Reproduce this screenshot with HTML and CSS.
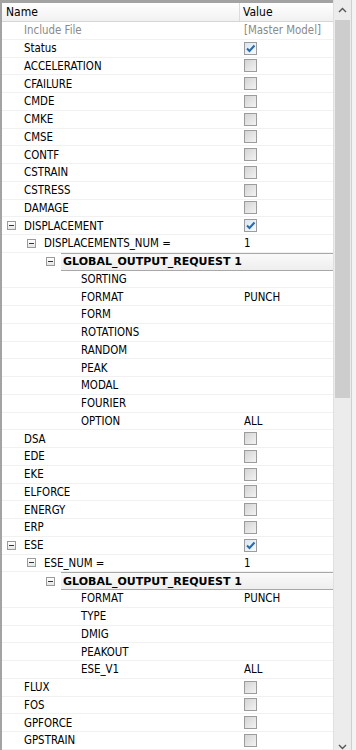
FILE: index.html
```html
<!DOCTYPE html>
<html lang="en">
<head>
  <meta charset="UTF-8" />
  <title>Output Requests</title>
  <link rel="stylesheet" href="styles.css">
</head>
<body>
  <div class="panel">
    <div class="tree">
      <div class="topband"></div>
      <div class="head">
        <div class="name">Name</div>
        <div class="value">Value</div>
      </div>
      <div id="rows"></div>
    </div>
    <div class="scrollbar">
      <div class="arrow up">
        <svg width="9" height="6" viewBox="0 0 9 6"><path d="M1 5 L4.5 1.5 L8 5" fill="none" stroke="#555" stroke-width="1.4"/></svg>
      </div>
      <div class="thumb"></div>
      <div class="track"></div>
      <div class="arrow down">
        <svg width="9" height="6" viewBox="0 0 9 6"><path d="M1 1 L4.5 4.5 L8 1" fill="none" stroke="#555" stroke-width="1.4"/></svg>
      </div>
    </div>
    <div class="edge"></div>
  </div>
  <script>
    // [label, level, kind, value]
    // kind: '' plain, 'ex' expandable, 'grp' bold group row, 'dim' greyed
    const rows = [
      ['Include File', 0, 'dim', '[Master Model]'],
      ['Status', 0, '', 'on'],
      ['ACCELERATION', 0, '', 'off'],
      ['CFAILURE', 0, '', 'off'],
      ['CMDE', 0, '', 'off'],
      ['CMKE', 0, '', 'off'],
      ['CMSE', 0, '', 'off'],
      ['CONTF', 0, '', 'off'],
      ['CSTRAIN', 0, '', 'off'],
      ['CSTRESS', 0, '', 'off'],
      ['DAMAGE', 0, '', 'off'],
      ['DISPLACEMENT', 0, 'ex', 'on'],
      ['DISPLACEMENTS_NUM =', 1, 'ex', '1'],
      ['GLOBAL_OUTPUT_REQUEST 1', 2, 'grp', ''],
      ['SORTING', 3, '', ''],
      ['FORMAT', 3, '', 'PUNCH'],
      ['FORM', 3, '', ''],
      ['ROTATIONS', 3, '', ''],
      ['RANDOM', 3, '', ''],
      ['PEAK', 3, '', ''],
      ['MODAL', 3, '', ''],
      ['FOURIER', 3, '', ''],
      ['OPTION', 3, '', 'ALL'],
      ['DSA', 0, '', 'off'],
      ['EDE', 0, '', 'off'],
      ['EKE', 0, '', 'off'],
      ['ELFORCE', 0, '', 'off'],
      ['ENERGY', 0, '', 'off'],
      ['ERP', 0, '', 'off'],
      ['ESE', 0, 'ex', 'on'],
      ['ESE_NUM =', 1, 'ex', '1'],
      ['GLOBAL_OUTPUT_REQUEST 1', 2, 'grp', ''],
      ['FORMAT', 3, '', 'PUNCH'],
      ['TYPE', 3, '', ''],
      ['DMIG', 3, '', ''],
      ['PEAKOUT', 3, '', ''],
      ['ESE_V1', 3, '', 'ALL'],
      ['FLUX', 0, '', 'off'],
      ['FOS', 0, '', 'off'],
      ['GPFORCE', 0, '', 'off'],
      ['GPSTRAIN', 0, '', 'off']
    ];

    const list = document.getElementById('rows');
    rows.forEach(([label, level, kind, value]) => {
      const row = document.createElement('div');
      row.className = 'row' + (kind === 'grp' ? ' grp' : '');

      const name = document.createElement('div');
      name.className = 'name lv' + level;
      const tog = document.createElement('span');
      tog.className = 'tog' + (kind === 'ex' || kind === 'grp' ? ' open' : '');
      name.appendChild(tog);
      const text = document.createElement('span');
      text.className = 'label' + (kind === 'dim' ? ' dim' : '');
      text.textContent = label;
      name.appendChild(text);
      row.appendChild(name);

      if (kind !== 'grp') {
        const val = document.createElement('div');
        val.className = 'value';
        if (value === 'on' || value === 'off') {
          const cb = document.createElement('span');
          cb.className = 'cb ' + value;
          if (value === 'on') {
            cb.innerHTML = '<svg width="11" height="11" viewBox="0 0 11 11"><path d="M2 5.5 L4.5 8 L9.5 2.5" fill="none" stroke="#2a6aa6" stroke-width="2"/></svg>';
          }
          val.appendChild(cb);
        } else {
          val.textContent = value;
          if (kind === 'dim') val.classList.add('dim');
        }
        row.appendChild(val);
      }
      list.appendChild(row);
    });
  </script>
</body>
</html>
```

FILE: styles.css
```css
body {
  margin: 0;
  width: 356px;
  height: 750px;
  overflow: hidden;
  background: #fff;
  font-family: "DejaVu Sans Condensed", "DejaVu Sans", sans-serif;
  font-stretch: condensed;
  font-size: 11.4px;
  color: #000;
}
.panel {
  display: flex;
  height: 750px;
}
.tree {
  width: 331px;
  border-left: 2px solid #a3a3a3;
  overflow: hidden;
}
.topband {
  height: 3px;
  background: #a3a3a3;
}
.head {
  display: flex;
  height: 18px;
  line-height: 19px;
  background: linear-gradient(#ffffff, #f1f1f1);
  border-bottom: 1px solid #d5d5d5;
  font-size: 12px;
}
.head .name {
  width: 238px;
  box-sizing: border-box;
  padding-left: 4px;
  border-right: 1px solid #dcdcdc;
}
.head .value {
  padding-left: 3px;
}
.row {
  display: flex;
  height: 17.75px;
  box-sizing: border-box;
  border-bottom: 1px solid #f1f1f1;
  align-items: center;
}
.row .name {
  width: 238px;
  box-sizing: border-box;
  flex: none;
  display: flex;
  align-items: center;
  white-space: nowrap;
}
.row .value {
  flex: 1;
  padding-left: 4px;
  display: flex;
  align-items: center;
}
.lv0 { padding-left: 5px; }
.lv1 { padding-left: 25px; }
.lv2 { padding-left: 44px; }
.lv3 { padding-left: 62px; }
.tog {
  width: 9px;
  height: 9px;
  margin-right: 8px;
  box-sizing: border-box;
  flex: none;
}
.tog.open {
  border: 1px solid #9a9a9a;
  background: linear-gradient(#ffffff, #e6e6e6);
  position: relative;
}
.tog.open::after {
  content: "";
  position: absolute;
  left: 1px;
  right: 1px;
  top: 3px;
  height: 1px;
  background: #333;
}
.dim {
  color: #8a8a8a;
}
.row.grp {
  border-bottom: none;
}
.row.grp .name {
  width: auto;
  flex: 1;
  height: 100%;
}
.row.grp .label {
  flex: 1;
  align-self: stretch;
  margin-left: -2px;
  padding-left: 2px;
  display: flex;
  align-items: center;
  font-family: "DejaVu Sans", sans-serif;
  font-stretch: normal;
  font-size: 11px;
  font-weight: bold;
  background: linear-gradient(#fafafa, #eeeeee);
  border-top: 1px solid #a8a8a8;
  border-bottom: 1px solid #a8a8a8;
}
.cb {
  width: 13px;
  height: 13px;
  box-sizing: border-box;
  border: 1px solid #9c9c9c;
  background: linear-gradient(135deg, #d4d4d4, #f3f3f3);
  display: flex;
  align-items: center;
  justify-content: center;
}
.cb.on {
  background: linear-gradient(135deg, #d8e6f2, #f7fbff);
}
.scrollbar {
  width: 17px;
  display: flex;
  flex-direction: column;
  background: #ececec;
  border-left: 1px solid #e0e0e0;
  border-right: 1px solid #cfcfcf;
}
.arrow {
  height: 20px;
  display: flex;
  align-items: center;
  justify-content: center;
}
.arrow.down {
  height: 14px;
  align-items: flex-end;
}
.thumb {
  height: 378px;
  margin: 0 1px;
  background: #cdcdcd;
}
.track {
  flex: 1;
}
.edge {
  flex: 1;
  background: #f3f3f3;
}
```
